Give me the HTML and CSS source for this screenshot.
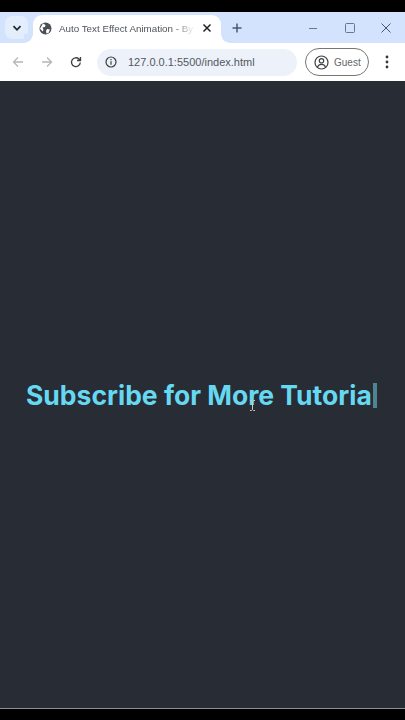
FILE: index.html
```html
<!DOCTYPE html>
<html lang="en">
<head>
    <meta charset="UTF-8">
    <meta name="viewport" content="width=device-width, initial-scale=1.0">
    <title>Auto Text Effect Animation</title>
    <link rel="stylesheet" href="styles.css">
</head>
<body>
    <div class="browser">
        <div class="tab-strip">
            <div class="tab-search">
                <svg width="12" height="12" viewBox="0 0 12 12"><path d="M2.5 4.2 6 7.8l3.5-3.6" fill="none" stroke="#1f2a37" stroke-width="1.8"/></svg>
            </div>
            <div class="tab">
                <svg class="favicon" width="13" height="13" viewBox="0 0 13 13">
                    <circle cx="6.5" cy="6.5" r="6" fill="#4a4f55"/>
                    <path d="M4 1.5 6.5 3 6 5 3.5 5.5 4.5 8 3.5 9.5 1 6.5ZM8 7l3 .5L9.500 11 7.500 11.500 7 9Z" fill="#fff"/>
                </svg>
                <span class="tab-title">Auto Text Effect Animation - By</span>
                <svg class="tab-close" width="10" height="10" viewBox="0 0 10 10"><path d="M1.500 1.500l7 7M8.500 1.500l-7 7" stroke="#222" stroke-width="1.500"/></svg>
            </div>
            <svg class="new-tab" width="12" height="12" viewBox="0 0 12 12"><path d="M6 1.500v9M1.500 6h9" stroke="#4a5a6e" stroke-width="1.500"/></svg>
            <div class="window-controls">
                <svg width="10" height="10" viewBox="0 0 10 10"><path d="M1 5.500h8" stroke="#6b7686" stroke-width="1"/></svg>
                <svg width="10" height="10" viewBox="0 0 10 10"><rect x=".5" y=".5" width="9" height="9" rx="1" fill="none" stroke="#6b7686" stroke-width="1"/></svg>
                <svg width="10" height="10" viewBox="0 0 10 10"><path d="M.5 .5l9 9M9.500 .5l-9 9" stroke="#4a5564" stroke-width="1"/></svg>
            </div>
        </div>
        <div class="toolbar">
            <svg class="nav-icon" width="12" height="12" viewBox="0 0 12 12"><path d="M11 6H1.500M6 1.500 1.500 6 6 10.500" fill="none" stroke="#b4b7bb" stroke-width="1.300"/></svg>
            <svg class="nav-icon" width="12" height="12" viewBox="0 0 12 12"><path d="M1 6h9.500M6 1.500 10.500 6 6 10.500" fill="none" stroke="#b4b7bb" stroke-width="1.300"/></svg>
            <svg class="nav-icon" width="12" height="12" viewBox="0 0 12 12"><path d="M10.300 6.500A4.400 4.400 0 1 1 9 3L10.500 4.500M10.500 1v3.500H7" fill="none" stroke="#3c4043" stroke-width="1.300"/></svg>
            <div class="address-bar">
                <svg width="12" height="12" viewBox="0 0 12 12">
                    <circle cx="6" cy="6" r="5" fill="none" stroke="#3c4043" stroke-width="1.200"/>
                    <path d="M6 5.300v3.400M6 3v1.300" stroke="#3c4043" stroke-width="1.200"/>
                </svg>
                <span class="url">127.0.0.1:5500/index.html</span>
            </div>
            <div class="profile">
                <svg width="15" height="15" viewBox="0 0 15 15">
                    <circle cx="7.500" cy="7.500" r="6.500" fill="none" stroke="#3c4043" stroke-width="1.200"/>
                    <circle cx="7.500" cy="5.800" r="2.200" fill="none" stroke="#3c4043" stroke-width="1.200"/>
                    <path d="M3.500 12c.8-2 2.300-2.700 4-2.700s3.200.7 4 2.700" fill="none" stroke="#3c4043" stroke-width="1.200"/>
                </svg>
                <span>Guest</span>
            </div>
            <svg class="menu-icon" width="4" height="14" viewBox="0 0 4 14">
                <circle cx="2" cy="2" r="1.400" fill="#33373b"/>
                <circle cx="2" cy="7" r="1.400" fill="#33373b"/>
                <circle cx="2" cy="12" r="1.400" fill="#33373b"/>
            </svg>
        </div>
        <div class="page">
            <h1 class="typed">Subscribe for More Tutoria<span class="caret"></span></h1>
            <svg class="mouse-cursor" width="7" height="11" viewBox="0 0 7 11"><path d="M1 .5h1.500L3.500 1.500 4.500.5H6M3.500 1.500v8M1 10.500h1.500l1-1 1 1H6" fill="none" stroke="#c9c9c9" stroke-width="1"/></svg>
        </div>
    </div>
</body>
</html>
```
FILE: styles.css
```css
* {
    box-sizing: border-box;
}
html, body {
    margin: 0;
    padding: 0;
    height: 100%;
    background-color: #000;
    overflow: hidden;
}
body {
    font-family: "Open Sans", "Liberation Sans", sans-serif;
    padding: 12px 0 11px;
}
.browser {
    height: 100%;
    display: flex;
    flex-direction: column;
}
.tab-strip {
    height: 31px;
    background-color: #d3e3fd;
    display: flex;
    align-items: flex-end;
    padding-left: 5px;
    position: relative;
}
.tab-search {
    width: 23px;
    height: 23px;
    margin: 0 5px 4px 0;
    background-color: #e3edfc;
    border-radius: 7px;
    display: flex;
    align-items: center;
    justify-content: center;
}
.tab {
    width: 188px;
    height: 28px;
    background-color: #fff;
    border-radius: 9px 9px 0 0;
    display: flex;
    align-items: center;
    padding: 0 9px 2px 6px;
    position: relative;
}
.tab::before,
.tab::after {
    content: "";
    position: absolute;
    bottom: 0;
    width: 9px;
    height: 9px;
}
.tab::before {
    left: -9px;
    background: radial-gradient(circle at 0 0, #d3e3fd 8.500px, #fff 9px);
}
.tab::after {
    right: -9px;
    background: radial-gradient(circle at 100% 0, #d3e3fd 8.500px, #fff 9px);
}
.favicon {
    flex-shrink: 0;
}
.tab-title {
    flex-grow: 1;
    margin-left: 7px;
    font-family: "Liberation Sans", Arial, sans-serif;
    font-size: 9.800px;
    color: #4f5459;
    white-space: nowrap;
    -webkit-mask-image: linear-gradient(to right, #000 84%, transparent 100%);
    mask-image: linear-gradient(to right, #000 84%, transparent 100%);
}
.tab-close {
    flex-shrink: 0;
    margin-left: 7px;
}
.new-tab {
    margin: 0 0 9px 10px;
}
.window-controls {
    margin-left: auto;
    width: 100px;
    height: 31px;
    display: flex;
    align-items: center;
    justify-content: space-between;
    padding: 0 14px 0 3px;
}
.toolbar {
    height: 38px;
    background-color: #fff;
    display: flex;
    align-items: center;
    padding-left: 12px;
    flex-shrink: 0;
}
.nav-icon {
    margin-right: 17px;
}
.nav-icon:nth-child(3) {
    margin-right: 15px;
}
.address-bar {
    width: 200px;
    height: 27px;
    background-color: #edf2fa;
    border-radius: 14px;
    display: flex;
    align-items: center;
    padding-left: 8px;
}
.url {
    margin-left: 11px;
    font-family: "Liberation Sans", Arial, sans-serif;
    font-size: 11px;
    color: #54585d;
    white-space: nowrap;
}
.profile {
    width: 64px;
    height: 28px;
    margin-left: 8px;
    border: 1px solid #747775;
    border-radius: 14px;
    display: flex;
    align-items: center;
    padding-left: 8px;
    font-family: "Liberation Sans", Arial, sans-serif;
    font-size: 10px;
    color: #63676b;
}
.profile span {
    margin-left: 5px;
}
.menu-icon {
    margin-left: 16px;
}
.page {
    flex-grow: 1;
    background-color: #282c34;
    border-bottom: 1px solid #8a8f90;
    display: flex;
    align-items: center;
    padding: 1px 0 0 26px;
    position: relative;
}
.typed {
    margin: 0;
    font-family: Inter, "Open Sans", sans-serif;
    font-weight: 700;
    font-size: 26.500px;
    color: #66d8f2;
    white-space: nowrap;
    display: flex;
    align-items: center;
}
.caret {
    display: inline-block;
    width: 4px;
    height: 25px;
    margin-left: 1px;
    background-color: #4f8593;
}
.mouse-cursor {
    position: absolute;
    left: 249px;
    top: 319px;
}
```
